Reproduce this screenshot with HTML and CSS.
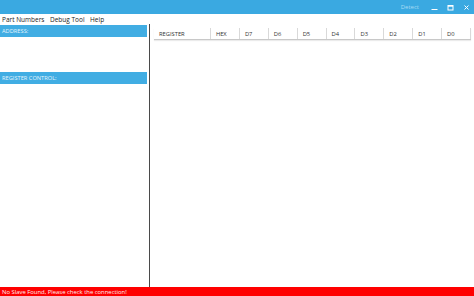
FILE: index.html
```html
<!DOCTYPE html>
<html>
<head>
<meta charset="utf-8">
<link rel="stylesheet" href="styles.css">
</head>
<body>
<div class="app">
  <div class="titlebar">
    <span class="detect">Detect</span>
    <span class="tb-btn"><svg width="7" height="7" viewBox="0 0 7 7"><rect x="0.5" y="5" width="6" height="1" fill="#fff"/></svg></span>
    <span class="tb-btn"><svg width="7" height="7" viewBox="0 0 7 7"><rect x="1" y="1.5" width="5" height="4.5" fill="none" stroke="#fff" stroke-width="1"/><rect x="1" y="1.5" width="5" height="1.2" fill="#fff"/></svg></span>
    <span class="tb-btn"><svg width="7" height="7" viewBox="0 0 7 7"><path d="M1.5 1.5 L5.5 5.5 M5.5 1.5 L1.5 5.5" stroke="#fff" stroke-width="1"/></svg></span>
  </div>
  <div class="menubar">
    <span class="menu-item">Part Numbers</span>
    <span class="menu-item">Debug Tool</span>
    <span class="menu-item">Help</span>
  </div>
  <div class="main">
    <div class="left">
      <div class="section-head">ADDRESS:</div>
      <div class="section-body"></div>
      <div class="section-head">REGISTER CONTROL:</div>
    </div>
    <div class="divider"></div>
    <div class="right">
      <div class="grid-head">
        <div class="col c-reg">REGISTER</div>
        <div class="col c-hex">HEX</div>
        <div class="col c-bit">D7</div>
        <div class="col c-bit">D6</div>
        <div class="col c-bit">D5</div>
        <div class="col c-bit">D4</div>
        <div class="col c-bit">D3</div>
        <div class="col c-bit">D2</div>
        <div class="col c-bit">D1</div>
        <div class="col c-bit">D0</div>
      </div>
    </div>
  </div>
  <div class="status">No Slave Found, Please check the connection!</div>
</div>
</body>
</html>
```

FILE: styles.css
```css
html, body {
  margin: 0;
  padding: 0;
  background: #fff;
}
body {
  font-family: "Open Sans", "Noto Sans", "Liberation Sans", sans-serif;
  color: #222;
}
.app {
  width: 474px;
  height: 296px;
  display: flex;
  flex-direction: column;
  overflow: hidden;
}
.titlebar {
  height: 14px;
  background: #3aa9e1;
  display: flex;
  align-items: center;
  justify-content: flex-end;
  padding-right: 0;
  flex: none;
}
.detect {
  font-size: 6px;
  color: #a9dbf4;
  margin-right: 7px;
}
.tb-btn {
  width: 16px;
  display: flex;
  justify-content: center;
  align-items: center;
}
.menubar {
  height: 10px;
  display: flex;
  align-items: center;
  padding-left: 2px;
  gap: 5.5px;
  font-size: 6.5px;
  color: #222;
  flex: none;
}
.main {
  flex: 1;
  display: flex;
  min-height: 0;
}
.left {
  width: 148px;
  padding-top: 1px;
  display: flex;
  flex-direction: column;
}
.section-head {
  height: 12px;
  background: #41ade3;
  color: #e6f5fd;
  font-size: 5.7px;
  display: flex;
  align-items: center;
  padding-left: 2px;
}
.section-body {
  height: 35px;
}
.divider {
  width: 1px;
  background: #4a4a4a;
  margin-left: 2px;
}
.right {
  flex: 1;
  padding: 4px 3px 0 4px;
}
.grid-head {
  display: flex;
  height: 11px;
  border-bottom: 1px solid #c8c8c8;
  box-shadow: 0 1px 1px rgba(0,0,0,0.08);
  font-size: 5.8px;
  color: #333;
}
.col {
  display: flex;
  align-items: center;
  padding-left: 5px;
  border-right: 1px solid #d9d9d9;
  box-sizing: border-box;
}
.c-reg { width: 57px; }
.c-hex { width: 29px; }
.c-bit { width: 28.9px; }
.status {
  height: 9px;
  background: #ff0000;
  color: #fff0f0;
  font-size: 5.9px;
  display: flex;
  align-items: center;
  padding-left: 2px;
  flex: none;
}
```
